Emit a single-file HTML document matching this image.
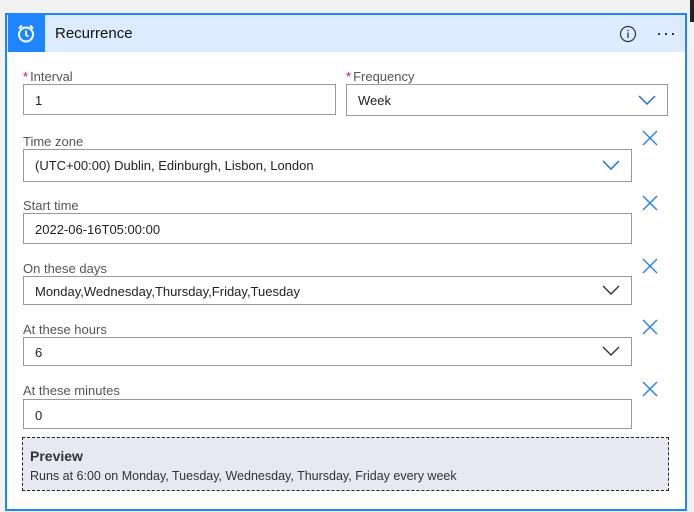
<!DOCTYPE html>
<html><head><style>
*{margin:0;padding:0;box-sizing:border-box}
body{width:694px;height:512px;background:#f2f2f2;font-family:"Liberation Sans",sans-serif;position:relative;overflow:hidden;color:#222}
.card{position:absolute;left:5px;top:13px;width:682px;height:498px;border:2px solid #1f85ff;background:#fff}
.hdr{position:absolute;left:0;top:0;width:678px;height:37px;background:#dcebfd}
.ico{position:absolute;left:1px;top:0;width:37px;height:37px;background:#1f85ff}
.ttl{position:absolute;left:48px;top:10px;font-size:15px;color:#111}
.lbl{position:absolute;font-size:13px;color:#555}
.lbl b{color:#e0003c;font-weight:normal;margin-right:2px}
.in{position:absolute;border:1px solid #999;height:31px;font-size:13px;padding:8px 0 0 11px;color:#222;background:#fff}
.x{position:absolute;width:16px;height:16px}
.chev{position:absolute;right:11px;top:10px}
.prev{position:absolute;left:15px;top:422px;width:647px;height:54px;border:1px dashed #222;background:#e8e8f2}
.dot{position:absolute;top:18px;width:2px;height:2px;background:#333}
</style></head><body>
<div style="position:absolute;left:690px;top:0;width:4px;height:22px;background:#222"></div>
<div class="card">
 <div class="hdr">
  <div class="ico"><svg width="37" height="37" viewBox="0 0 37 37"><circle cx="18" cy="19.5" r="7" fill="none" stroke="#fff" stroke-width="2"/><path d="M18 15.5v4.5l2.5 1.5" fill="none" stroke="#fff" stroke-width="1.8"/><path d="M11 13.5l3-3M25 13.5l-3-3" stroke="#fff" stroke-width="2"/></svg></div>
  <div class="ttl">Recurrence</div>
  <svg style="position:absolute;left:612px;top:10px" width="18" height="18"><circle cx="9" cy="9" r="7.5" fill="none" stroke="#333" stroke-width="1.2"/><rect x="8.4" y="7.5" width="1.3" height="5.5" fill="#333"/><rect x="8.4" y="4.8" width="1.3" height="1.4" fill="#333"/></svg>
  <div class="dot" style="left:651px"></div><div class="dot" style="left:658px"></div><div class="dot" style="left:665px"></div>
 </div>
 <div class="lbl" style="left:16px;top:54px"><b>*</b>Interval</div>
 <div class="in" style="left:16px;top:69px;width:313px">1</div>
 <div class="lbl" style="left:339px;top:54px"><b>*</b>Frequency</div>
 <div class="in" style="left:339px;top:69px;width:322px;height:32px">Week<svg class="chev" width="18" height="10"><path d="M1 1l8 8 8-8" fill="none" stroke="#1f6fd9" stroke-width="1.5"/></svg></div>

 <div class="lbl" style="left:16px;top:119px">Time zone</div>
 <div class="in" style="left:16px;top:134px;width:609px;height:33px">(UTC+00:00) Dublin, Edinburgh, Lisbon, London<svg class="chev" width="18" height="10"><path d="M1 1l8 8 8-8" fill="none" stroke="#1f6fd9" stroke-width="1.5"/></svg></div>
 <svg class="x" style="left:635px;top:115px"><path d="M1 1l14 14M15 1L1 15" stroke="#2a7fe0" stroke-width="1.4"/></svg>

 <div class="lbl" style="left:16px;top:183px">Start time</div>
 <div class="in" style="left:16px;top:198px;width:609px">2022-06-16T05:00:00</div>
 <svg class="x" style="left:635px;top:180px"><path d="M1 1l14 14M15 1L1 15" stroke="#2a7fe0" stroke-width="1.4"/></svg>

 <div class="lbl" style="left:16px;top:246px">On these days</div>
 <div class="in" style="left:16px;top:261px;width:609px;height:29px;padding-top:7px">Monday,Wednesday,Thursday,Friday,Tuesday<svg class="chev" style="top:8px" width="18" height="10"><path d="M1 1l8 8 8-8" fill="none" stroke="#333" stroke-width="1.4"/></svg></div>
 <svg class="x" style="left:635px;top:243px"><path d="M1 1l14 14M15 1L1 15" stroke="#2a7fe0" stroke-width="1.4"/></svg>

 <div class="lbl" style="left:16px;top:307px">At these hours</div>
 <div class="in" style="left:16px;top:322px;width:609px;height:29px;padding-top:7px">6<svg class="chev" style="top:8px" width="18" height="10"><path d="M1 1l8 8 8-8" fill="none" stroke="#333" stroke-width="1.4"/></svg></div>
 <svg class="x" style="left:635px;top:304px"><path d="M1 1l14 14M15 1L1 15" stroke="#2a7fe0" stroke-width="1.4"/></svg>

 <div class="lbl" style="left:16px;top:368px">At these minutes</div>
 <div class="in" style="left:16px;top:384px;width:609px;height:30px">0</div>
 <svg class="x" style="left:635px;top:366px"><path d="M1 1l14 14M15 1L1 15" stroke="#2a7fe0" stroke-width="1.4"/></svg>

 <div class="prev">
  <div style="position:absolute;left:7px;top:10px;font-size:14px;font-weight:bold;color:#333">Preview</div>
  <div style="position:absolute;left:7px;top:31px;font-size:12.5px;color:#333">Runs at 6:00 on Monday, Tuesday, Wednesday, Thursday, Friday every week</div>
 </div>
</div>
</body></html>
